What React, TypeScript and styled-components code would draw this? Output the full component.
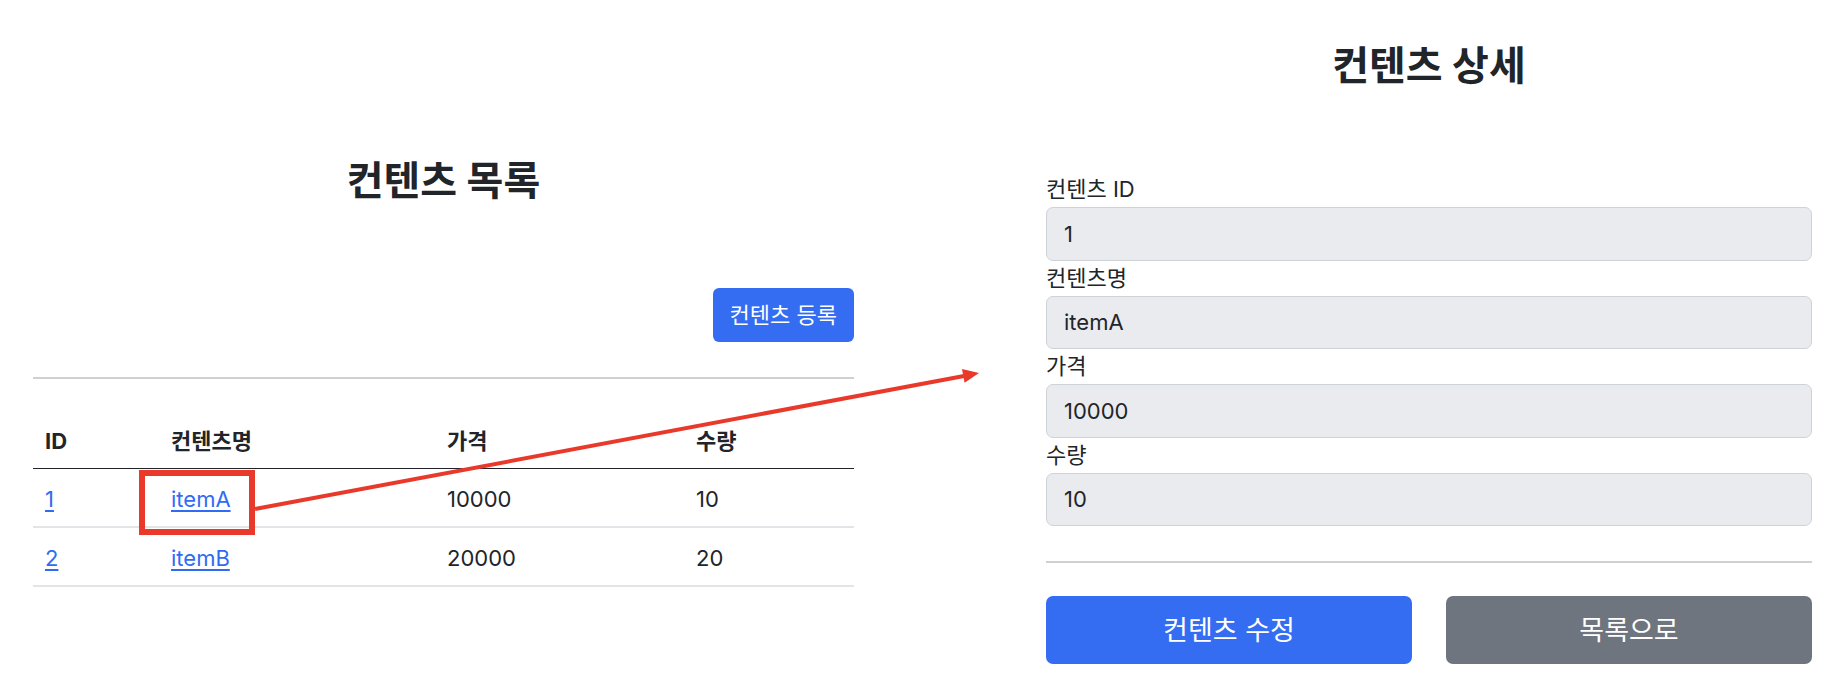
import React from 'react';
import styled, { createGlobalStyle } from 'styled-components';

const GlobalStyle = createGlobalStyle`
  html, body {
    margin: 0;
    padding: 0;
    background: #ffffff;
  }
  body {
    font-family: Inter, 'Noto Sans CJK KR', 'Noto Sans', sans-serif;
    color: #212529;
  }
  * {
    box-sizing: border-box;
  }
`;

interface Item {
  id: number;
  name: string;
  price: number;
  quantity: number;
}

const items: Item[] = [
  { id: 1, name: 'itemA', price: 10000, quantity: 10 },
  { id: 2, name: 'itemB', price: 20000, quantity: 20 },
];

const detail = [
  { label: '컨텐츠 ID', value: '1' },
  { label: '컨텐츠명', value: 'itemA' },
  { label: '가격', value: '10000' },
  { label: '수량', value: '10' },
];

export default function App() {
  return (
    <>
      <GlobalStyle />
      <Page>
        <ListPane>
          <Title>컨텐츠 목록</Title>
          <ActionRow>
            <Button $variant='primary'>컨텐츠 등록</Button>
          </ActionRow>
          <Divider />
          <Table>
            <colgroup>
              <col style={{ width: 126 }} />
              <col style={{ width: 276 }} />
              <col style={{ width: 249 }} />
              <col />
            </colgroup>
            <thead>
              <tr>
                <Th>ID</Th>
                <Th>컨텐츠명</Th>
                <Th>가격</Th>
                <Th>수량</Th>
              </tr>
            </thead>
            <tbody>
              {items.map((item) => (
                <tr key={item.id}>
                  <Td>
                    <Link href='#'>{item.id}</Link>
                  </Td>
                  <Td>
                    <Link href='#'>{item.name}</Link>
                  </Td>
                  <Td>{item.price}</Td>
                  <Td>{item.quantity}</Td>
                </tr>
              ))}
            </tbody>
          </Table>
        </ListPane>

        <DetailPane>
          <DetailTitle>컨텐츠 상세</DetailTitle>
          <Form>
            {detail.map((field) => (
              <Field key={field.label}>
                <Label>{field.label}</Label>
                <Input type='text' value={field.value} readOnly />
              </Field>
            ))}
          </Form>
          <DetailDivider />
          <ButtonGrid>
            <Button $variant='primary' $large>
              컨텐츠 수정
            </Button>
            <Button $variant='secondary' $large>
              목록으로
            </Button>
          </ButtonGrid>
        </DetailPane>

        {/* 스크린샷 위에 그린 주석 (빨간 박스 + 화살표) */}
        <Highlight />
        <Annotation viewBox='0 0 1846 700' width='1846' height='700'>
          <line x1='255' y1='509' x2='964' y2='376' stroke='#e8392b' strokeWidth='4' />
          <polygon points='979,373 964.6,382.8 962,369.1' fill='#e8392b' />
        </Annotation>
      </Page>
    </>
  );
}

const Page = styled.div`
  position: relative;
  display: flex;
  width: 1846px;
  height: 700px;
  overflow: hidden;
`;

const ListPane = styled.section`
  width: 887px;
  padding: 157px 33px 0;
  display: flex;
  flex-direction: column;
`;

const Title = styled.h2`
  margin: 0;
  font-size: 40px;
  line-height: 48px;
  font-weight: 700;
  text-align: center;
  color: #212529;
`;

const ActionRow = styled.div`
  display: flex;
  justify-content: flex-end;
  margin-top: 83px;
`;

const Button = styled.button<{ $variant: 'primary' | 'secondary'; $large?: boolean }>`
  font-family: inherit;
  border: none;
  border-radius: ${({ $large }) => ($large ? '7px' : '6px')};
  color: #ffffff;
  background-color: ${({ $variant }) => ($variant === 'primary' ? '#346df2' : '#6e757e')};
  font-size: ${({ $large }) => ($large ? '27px' : '22px')};
  line-height: 1;
  height: ${({ $large }) => ($large ? '68px' : '54px')};
  padding: 0 ${({ $large }) => ($large ? '22px' : '17px')};
  width: ${({ $large }) => ($large ? '100%' : 'auto')};
  cursor: pointer;
`;

const Divider = styled.hr`
  margin: 35px 0 32px;
  border: none;
  border-top: 2px solid #cfd0d3;
`;

const Table = styled.table`
  width: 100%;
  border-collapse: collapse;
  table-layout: fixed;
  font-size: 22px;
`;

const Th = styled.th`
  text-align: left;
  font-weight: 700;
  padding: 14px 12px 10px;
  line-height: 33px;
  border-bottom: 1.5px solid #212529;
`;

const Td = styled.td`
  padding: 14px 12px 10px;
  line-height: 33px;
  border-bottom: 2px solid #e3e4e7;
`;

const Link = styled.a`
  color: #2f6cf3;
  text-decoration: underline;
  text-underline-offset: 3px;
`;

const DetailPane = styled.section`
  flex: 1;
  padding: 42px 34px 0 159px;
  display: flex;
  flex-direction: column;
`;

const DetailTitle = styled(Title)`
  margin-bottom: 82px;
`;

const Form = styled.div`
  display: flex;
  flex-direction: column;
`;

const Field = styled.div`
  display: flex;
  flex-direction: column;
`;

const Label = styled.label`
  font-size: 22px;
  line-height: 35px;
`;

const Input = styled.input`
  height: 53.5px;
  padding: 0 17px;
  font-family: inherit;
  font-size: 22px;
  color: #212529;
  background-color: #e9ebef;
  border: 1.5px solid #ced3d9;
  border-radius: 7px;
  outline: none;
`;

const DetailDivider = styled.hr`
  margin: 35px 0 33px;
  border: none;
  border-top: 2px solid #cfd0d3;
`;

const ButtonGrid = styled.div`
  display: grid;
  grid-template-columns: 1fr 1fr;
  gap: 34px;
`;

const Highlight = styled.div`
  position: absolute;
  left: 139px;
  top: 470px;
  width: 116px;
  height: 65px;
  border: 6px solid #e8392b;
  pointer-events: none;
`;

const Annotation = styled.svg`
  position: absolute;
  left: 0;
  top: 0;
  pointer-events: none;
`;
